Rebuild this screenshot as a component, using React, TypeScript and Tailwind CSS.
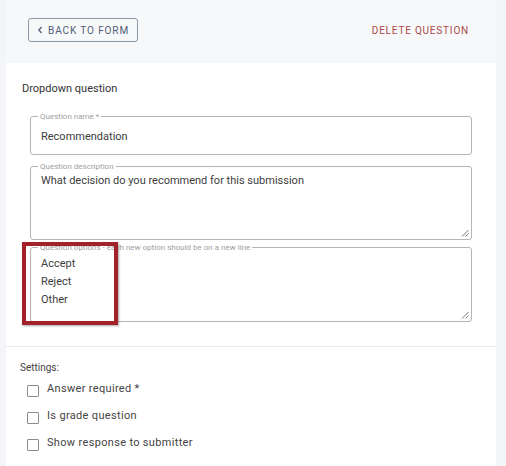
import { ChevronLeft } from 'lucide-react';

// grip shown in the bottom-right corner of a resizable textarea
function Grip() {
  return (
    <svg width="8" height="8" viewBox="0 0 8 8" className="absolute right-[2px] bottom-[2px]">
      <line x1="7.5" y1="1" x2="1" y2="7.5" stroke="#777" strokeWidth="1" />
      <line x1="7.5" y1="4.5" x2="4.5" y2="7.5" stroke="#777" strokeWidth="1" />
    </svg>
  );
}

function Legend({ text }: { text: string }) {
  return <legend className="ml-[-3px] px-[2px] text-[8px] leading-[9px] text-[#a0a0a0]">{text}</legend>;
}

const SETTINGS = ['Answer required *', 'Is grade question', 'Show response to submitter'];

export default function App() {
  return (
    <div className="min-h-[466px] w-[506px] bg-[#f3f5f9] pl-[6px] pr-[10px] font-['Roboto',sans-serif] text-[#333]">
      <div className="bg-white min-h-[466px]">
        {/* top bar */}
        <div className="h-[63px] bg-[#f7f8fa] flex items-center justify-between pl-[22px] pr-[27px]">
          <button className="flex items-center h-[24px] w-[110px] mt-[-3px] border border-[#8a96ab] rounded-[3px] pl-[6px] text-[10px] tracking-[0.09em] text-[#4f5d78]">
            <ChevronLeft size={10} strokeWidth={3} className="mr-[3px]" />
            BACK TO FORM
          </button>
          <span className="text-[10px] tracking-[0.08em] text-[#a84a47] mt-[-3px]">DELETE QUESTION</span>
        </div>

        {/* question fields */}
        <div className="px-[24px] pt-[17px] pb-[24px] border-b border-[#e8eaee]">
          <div className="text-[11px] leading-[16px] text-[#333] ml-[-8px] mt-[1px]">Dropdown question</div>

          <fieldset className="mt-[15px] border border-[#b5b5b5] rounded-[3px] px-[10px]">
            <Legend text="Question name *" />
            <div className="h-[33px] pt-[7px] text-[11px] leading-[18px] text-[#3d3d3d]">Recommendation</div>
          </fieldset>

          <fieldset className="relative mt-[7px] border border-[#b5b5b5] rounded-[3px] px-[10px]">
            <Legend text="Question description" />
            <div className="h-[68px] pt-[1px] text-[11px] leading-[18px] text-[#3d3d3d]">
              What decision do you recommend for this submission
            </div>
            <Grip />
          </fieldset>

          <fieldset className="relative mt-[3px] border border-[#b5b5b5] rounded-[3px] px-[10px]">
            <Legend text="Question options - each new option should be on a new line" />
            <div className="h-[69px] pt-[3px] text-[11px] leading-[18px] text-[#3d3d3d]">
              <div>Accept</div>
              <div>Reject</div>
              <div>Other</div>
            </div>
            <Grip />
            {/* highlight box over the options */}
            <div className="absolute left-[-9px] top-[-10px] w-[96px] h-[83px] border-[4px] border-[#a3222a] shadow-[1px_1px_2px_rgba(0,0,0,0.35)]" />
          </fieldset>
        </div>

        {/* settings */}
        <div className="pl-[14px] pt-[14px]">
          <div className="text-[10px] leading-[14px] text-[#444]">Settings:</div>
          <div className="mt-[1px]">
            {SETTINGS.map((s) => (
              <label key={s} className="flex items-center h-[27px] pl-[7px]">
                <span className="w-[12px] h-[12px] border border-[#8c8c8c] rounded-[1px] mr-[8px] mt-[2px]" />
                <span className="text-[11px] tracking-[0.03em] text-[#444]">{s}</span>
              </label>
            ))}
          </div>
        </div>
      </div>
    </div>
  );
}
